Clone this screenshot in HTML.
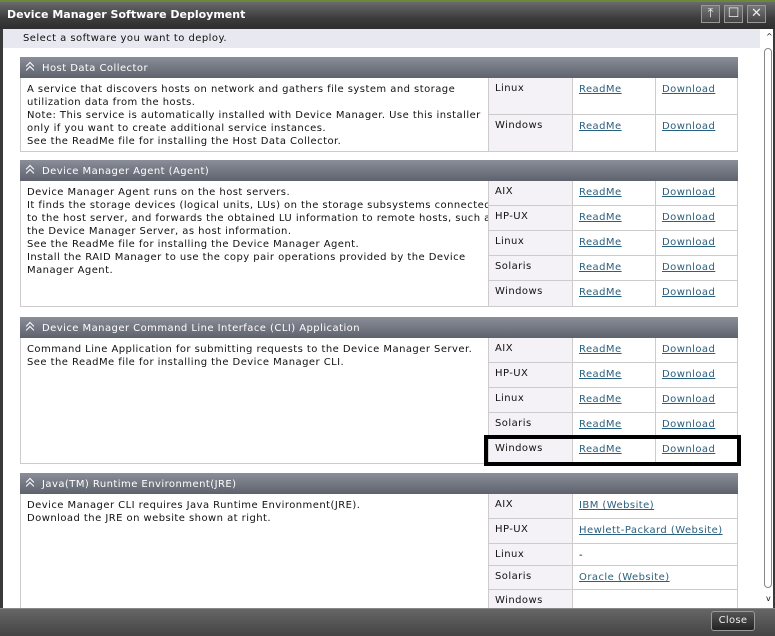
<!DOCTYPE html>
<html><head><meta charset="utf-8"><style>
*{margin:0;padding:0;box-sizing:border-box}
body{width:775px;height:636px;overflow:hidden;background:#3a3a3a;font-family:"DejaVu Sans","Liberation Sans",sans-serif;font-size:10px;letter-spacing:0.45px;color:#111;position:relative}
.a{position:absolute}
#title{left:0;top:0;width:775px;height:29px;background:linear-gradient(#6a6a6a,#3c3c3c 60%,#2e2e2e);border-top:2px solid #6a8a3a;color:#fff;font-weight:bold;font-size:11px;letter-spacing:0;padding:6px 0 0 7px}
.tb{top:5px;width:19px;height:18px;border:1px solid #999;background:linear-gradient(#777,#444);color:#eee;text-align:center;font-size:13px;line-height:16px;letter-spacing:0}
#main{left:3px;top:29px;width:770px;height:579px;background:#fff}
#instr{left:3px;top:29px;width:757px;height:19px;background:#e8e8f0;padding:4px 0 0 20px}
.hd{left:20px;width:718px;height:21px;background:linear-gradient(#8a8e98,#5e626c);color:#fff;padding:6px 0 0 22px}
.hd:before{content:"";position:absolute;left:7px;top:6px;width:5px;height:5px;border-left:1.5px solid #fff;border-top:1.5px solid #fff;transform:rotate(45deg)}
.hd:after{content:"";position:absolute;left:7px;top:10px;width:5px;height:5px;border-left:1.5px solid #fff;border-top:1.5px solid #fff;transform:rotate(45deg)}
.bd{left:20px;width:718px;border:1px solid #ccc;border-top:none;background:#fff}
.desc{left:20px;width:468px;padding:5px 0 0 7px;line-height:13px;white-space:nowrap;overflow:hidden}
.os{left:488px;width:84px;background:#f4f2f6;border-left:1px solid #ccc;border-bottom:1px solid #ccc;padding:5px 0 0 6px}
.rm{left:572px;width:83px;border-left:1px solid #ccc;border-bottom:1px solid #ccc;padding:6px 0 0 6px}
.dl{left:655px;width:83px;border-left:1px solid #ccc;border-bottom:1px solid #ccc;padding:6px 0 0 6px}
.wide{left:572px;width:166px;border-left:1px solid #ccc;border-bottom:1px solid #ccc;padding:6px 0 0 6px}
u{color:#2a5f7e}
#foot{left:0;top:608px;width:775px;height:28px;background:linear-gradient(#666,#444);border-top:1px solid #888}
#close{left:711px;top:611px;width:44px;height:20px;border:1px solid #999;border-radius:3px;background:linear-gradient(#555,#222);color:#eee;text-align:center;line-height:18px;letter-spacing:0.3px}
#sb{left:764px;top:48px;width:8px;height:540px;border:1px solid #888;border-radius:4px;background:#fff}
</style></head><body>
<div class="a" id="title">Device Manager Software Deployment</div>
<div class="a tb" style="left:701px">⤒</div>
<div class="a tb" style="left:724px">☐</div>
<div class="a tb" style="left:747px">✕</div>
<div class="a" id="main"></div>
<div class="a" id="instr">Select a software you want to deploy.</div>
<div class="a" style="left:766px;top:32px;font-size:8px">^</div>
<div class="a" id="sb"></div>
<div class="a" style="left:766px;top:594px;font-size:8px">v</div>

<div class="a hd" style="top:57px">Host Data Collector</div>
<div class="a bd" style="top:78px;height:74px"></div>
<div class="a desc" style="top:78px">A service that discovers hosts on network and gathers file system and storage<br>utilization data from the hosts.<br>Note: This service is automatically installed with Device Manager. Use this installer<br>only if you want to create additional service instances.<br>See the ReadMe file for installing the Host Data Collector.</div>
<div class="a os" style="top:78px;height:37px">Linux</div><div class="a rm" style="top:78px;height:37px"><u>ReadMe</u></div><div class="a dl" style="top:78px;height:37px"><u>Download</u></div>
<div class="a os" style="top:115px;height:37px">Windows</div><div class="a rm" style="top:115px;height:37px"><u>ReadMe</u></div><div class="a dl" style="top:115px;height:37px"><u>Download</u></div>

<div class="a hd" style="top:160px">Device Manager Agent (Agent)</div>
<div class="a bd" style="top:181px;height:126px"></div>
<div class="a desc" style="top:181px">Device Manager Agent runs on the host servers.<br>It finds the storage devices (logical units, LUs) on the storage subsystems connected<br>to the host server, and forwards the obtained LU information to remote hosts, such as<br>the Device Manager Server, as host information.<br>See the ReadMe file for installing the Device Manager Agent.<br>Install the RAID Manager to use the copy pair operations provided by the Device<br>Manager Agent.</div>
<div class="a os" style="top:181px;height:25px">AIX</div><div class="a rm" style="top:181px;height:25px"><u>ReadMe</u></div><div class="a dl" style="top:181px;height:25px"><u>Download</u></div>
<div class="a os" style="top:206px;height:25px">HP-UX</div><div class="a rm" style="top:206px;height:25px"><u>ReadMe</u></div><div class="a dl" style="top:206px;height:25px"><u>Download</u></div>
<div class="a os" style="top:231px;height:25px">Linux</div><div class="a rm" style="top:231px;height:25px"><u>ReadMe</u></div><div class="a dl" style="top:231px;height:25px"><u>Download</u></div>
<div class="a os" style="top:256px;height:25px">Solaris</div><div class="a rm" style="top:256px;height:25px"><u>ReadMe</u></div><div class="a dl" style="top:256px;height:25px"><u>Download</u></div>
<div class="a os" style="top:281px;height:26px">Windows</div><div class="a rm" style="top:281px;height:26px"><u>ReadMe</u></div><div class="a dl" style="top:281px;height:26px"><u>Download</u></div>

<div class="a hd" style="top:317px">Device Manager Command Line Interface (CLI) Application</div>
<div class="a bd" style="top:338px;height:126px"></div>
<div class="a desc" style="top:338px">Command Line Application for submitting requests to the Device Manager Server.<br>See the ReadMe file for installing the Device Manager CLI.</div>
<div class="a os" style="top:338px;height:25px">AIX</div><div class="a rm" style="top:338px;height:25px"><u>ReadMe</u></div><div class="a dl" style="top:338px;height:25px"><u>Download</u></div>
<div class="a os" style="top:363px;height:25px">HP-UX</div><div class="a rm" style="top:363px;height:25px"><u>ReadMe</u></div><div class="a dl" style="top:363px;height:25px"><u>Download</u></div>
<div class="a os" style="top:388px;height:25px">Linux</div><div class="a rm" style="top:388px;height:25px"><u>ReadMe</u></div><div class="a dl" style="top:388px;height:25px"><u>Download</u></div>
<div class="a os" style="top:413px;height:25px">Solaris</div><div class="a rm" style="top:413px;height:25px"><u>ReadMe</u></div><div class="a dl" style="top:413px;height:25px"><u>Download</u></div>
<div class="a os" style="top:438px;height:26px">Windows</div><div class="a rm" style="top:438px;height:26px"><u>ReadMe</u></div><div class="a dl" style="top:438px;height:26px"><u>Download</u></div>
<div class="a" style="left:484px;top:435px;width:257px;height:31px;border:4px solid #000"></div>

<div class="a hd" style="top:473px">Java(TM) Runtime Environment(JRE)</div>
<div class="a bd" style="top:494px;height:120px"></div>
<div class="a desc" style="top:494px">Device Manager CLI requires Java Runtime Environment(JRE).<br>Download the JRE on website shown at right.</div>
<div class="a os" style="top:494px;height:25px">AIX</div><div class="a wide" style="top:494px;height:25px"><u>IBM (Website)</u></div>
<div class="a os" style="top:519px;height:25px">HP-UX</div><div class="a wide" style="top:519px;height:25px"><u>Hewlett-Packard (Website)</u></div>
<div class="a os" style="top:544px;height:22px">Linux</div><div class="a wide" style="top:544px;height:22px">-</div>
<div class="a os" style="top:566px;height:24px">Solaris</div><div class="a wide" style="top:566px;height:24px"><u>Oracle (Website)</u></div>
<div class="a os" style="top:590px;height:24px">Windows</div><div class="a wide" style="top:590px;height:24px"></div>

<div class="a" id="foot"></div>
<div class="a" id="close">Close</div>
</body></html>
